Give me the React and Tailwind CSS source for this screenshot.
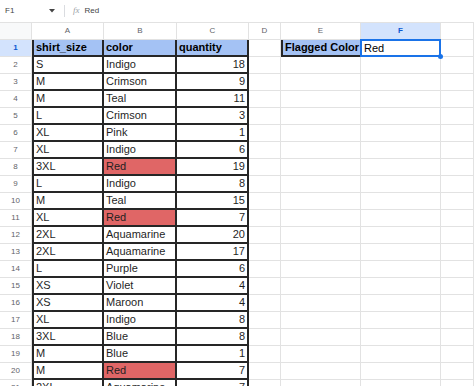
import React from 'react';

const rows = [
  ['S', 'Indigo', 18],
  ['M', 'Crimson', 9],
  ['M', 'Teal', 11],
  ['L', 'Crimson', 3],
  ['XL', 'Pink', 1],
  ['XL', 'Indigo', 6],
  ['3XL', 'Red', 19],
  ['L', 'Indigo', 8],
  ['M', 'Teal', 15],
  ['XL', 'Red', 7],
  ['2XL', 'Aquamarine', 20],
  ['2XL', 'Aquamarine', 17],
  ['L', 'Purple', 6],
  ['XS', 'Violet', 4],
  ['XS', 'Maroon', 4],
  ['XL', 'Indigo', 8],
  ['3XL', 'Blue', 8],
  ['M', 'Blue', 1],
  ['M', 'Red', 7],
  ['2XL', 'Aquamarine', 7],
];

const light = 'border-r border-b border-[#e2e2e2]';
const dark = 'border-r-2 border-b-2 border-[#262626]';

const HeaderRow = () => (
  <div className="flex h-[18px] text-[8px] text-[#5f6368] border-t border-[#e2e2e2]">
    <div className={`w-[32px] bg-[#f8f9fa] ${light}`} />
    {['A', 'B', 'C', 'D', 'E'].map((c, i) => (
      <div
        key={c}
        className={`${['w-[72px]', 'w-[73px]', 'w-[72px]', 'w-[32px]', 'w-[80px]'][i]} flex items-center justify-center ${light}`}
      >
        {c}
      </div>
    ))}
    <div className={`w-[80px] flex items-center justify-center bg-[#d3e3fd] font-bold text-[#0b57d0] ${light}`}>F</div>
    <div className={`flex-1 ${light}`} />
  </div>
);

const TitleRow = () => (
  <div className="flex h-[17px] text-[11px] text-black">
    <div className={`w-[32px] flex items-center justify-center bg-[#d3e3fd] text-[8px] font-bold text-[#0b57d0] ${light}`}>1</div>
    <div className={`w-[72px] border-l-2 border-l-[#262626] bg-[#a4c2f4] font-bold flex items-center px-[2px] ${dark}`}>shirt_size</div>
    <div className={`w-[73px] bg-[#a4c2f4] font-bold flex items-center px-[2px] ${dark}`}>color</div>
    <div className={`w-[72px] bg-[#a4c2f4] font-bold flex items-center px-[2px] ${dark}`}>quantity</div>
    <div className={`w-[32px] ${light}`} />
    <div className="w-[80px] bg-[#a4c2f4] font-bold flex items-center px-[2px] border-l-2 border-b-2 border-[#262626]">Flagged Color</div>
    <div className={`relative w-[80px] flex items-center px-[3px] ${light}`}>
      Red
      <div className="absolute -left-px -top-px -right-px -bottom-px border-2 border-[#1a73e8]" />
      <div className="absolute -right-[3px] -bottom-[3px] w-[5px] h-[5px] rounded-full bg-[#1a73e8]" />
    </div>
    <div className={`flex-1 ${light}`} />
  </div>
);

const DataRow = ({ n, size, color, qty }) => {
  const red = color === 'Red';
  return (
    <div className="flex h-[17px] shrink-0 text-[11px] text-[#1f1f1f]">
      <div className={`w-[32px] flex items-center justify-center text-[8px] text-[#5f6368] ${light}`}>{n}</div>
      <div className={`w-[72px] border-l-2 border-l-[#262626] flex items-center px-[2px] ${dark}`}>{size}</div>
      <div className={`w-[73px] flex items-center px-[2px] ${red ? 'bg-[#e06666]' : ''} ${dark}`}>{color}</div>
      <div className={`w-[72px] flex items-center justify-end px-[2px] ${dark}`}>{qty}</div>
      <div className={`w-[32px] ${light}`} />
      <div className={`w-[80px] ${light}`} />
      <div className={`w-[80px] ${light}`} />
      <div className={`flex-1 ${light}`} />
    </div>
  );
};

export default function App() {
  return (
    <div className="w-[474px] h-[386px] overflow-hidden bg-white font-['Liberation_Sans',Arial,sans-serif]">
      <div className="h-[22px] flex items-center text-[8px] text-[#444]">
        <div className="w-[48px] pl-[5px]">F1</div>
        <svg width="6" height="4" viewBox="0 0 6 4" className="ml-[1px]">
          <path d="M0 0 L6 0 L3 3.5 Z" fill="#444" />
        </svg>
        <div className="w-px h-[12px] bg-[#dadce0] ml-[9px]" />
        <span className="ml-[8px] italic font-['Liberation_Serif',serif] text-[9px] text-[#9aa0a6]">fx</span>
        <span className="ml-[5px] text-[#444]">Red</span>
      </div>
      <HeaderRow />
      <TitleRow />
      {rows.map((r, i) => (
        <DataRow key={i} n={i + 2} size={r[0]} color={r[1]} qty={r[2]} />
      ))}
    </div>
  );
}
